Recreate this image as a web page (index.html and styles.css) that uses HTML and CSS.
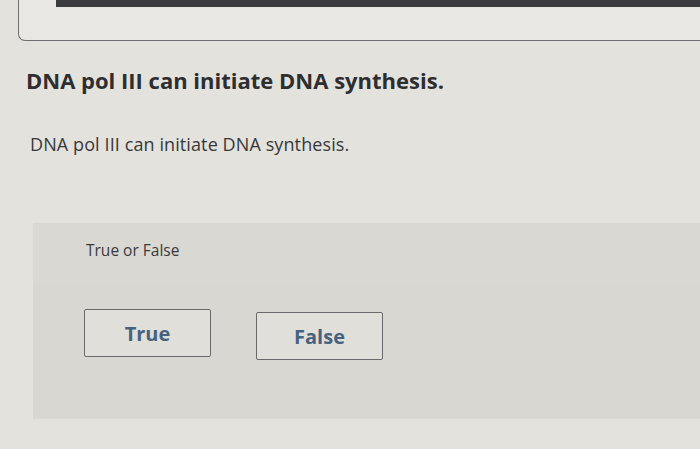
FILE: index.html
```html
<!DOCTYPE html>
<html>
<head>
<meta charset="utf-8">
<link rel="stylesheet" href="styles.css">
</head>
<body>
<div class="page">
  <div class="topcard"><div class="topbar"></div></div>
  <h1 class="title">DNA pol III can initiate DNA synthesis.</h1>
  <p class="prompt">DNA pol III can initiate DNA synthesis.</p>
  <div class="panel">
    <div class="panel-head">True or False</div>
    <div class="choices">
      <button class="choice choice-true">True</button>
      <button class="choice choice-false">False</button>
    </div>
  </div>
</div>
</body>
</html>
```
FILE: styles.css
```css
html, body {
  margin: 0;
  padding: 0;
  background: #e3e2dd;
  width: 700px;
  height: 449px;
  overflow: hidden;
  font-family: "Open Sans", sans-serif;
}
.page {
  display: flex;
  flex-direction: column;
}
.topcard {
  margin-left: 18px;
  height: 40px;
  border-left: 1.5px solid #6f6f70;
  border-bottom: 1.5px solid #6f6f70;
  border-bottom-left-radius: 7px;
  background: #e8e7e3;
  padding-left: 37px;
}
.topbar {
  height: 7px;
  background: #3b3c40;
}
.title {
  margin: 24px 0 0 26px;
  font-size: 22px;
  font-weight: 700;
  color: #2e2e30;
  line-height: 30px;
}
.prompt {
  margin: 37px 0 0 30px;
  font-size: 18px;
  color: #38383a;
  line-height: 24px;
  letter-spacing: 0.1px;
}
.panel {
  margin: 67px 0 0 33px;
  height: 196px;
  background: #d8d7d2;
  display: flex;
  flex-direction: column;
}
.panel-head {
  padding: 17px 0 0 53px;
  height: 60px;
  box-sizing: border-box;
  font-size: 15.5px;
  line-height: 20px;
  color: #3a3a3c;
  background: #d9d8d3;
}
.choices {
  display: flex;
  gap: 45px;
  padding: 26px 0 0 51px;
}
.choice {
  width: 127px;
  height: 48px;
  border: 1.5px solid #6a6a6c;
  border-radius: 2px;
  background: #e0dfda;
  font-family: "Open Sans", sans-serif;
  font-weight: 700;
  font-size: 20px;
  color: #46627f;
  padding: 0;
}
.choice-false {
  margin-top: 3px;
}
```
